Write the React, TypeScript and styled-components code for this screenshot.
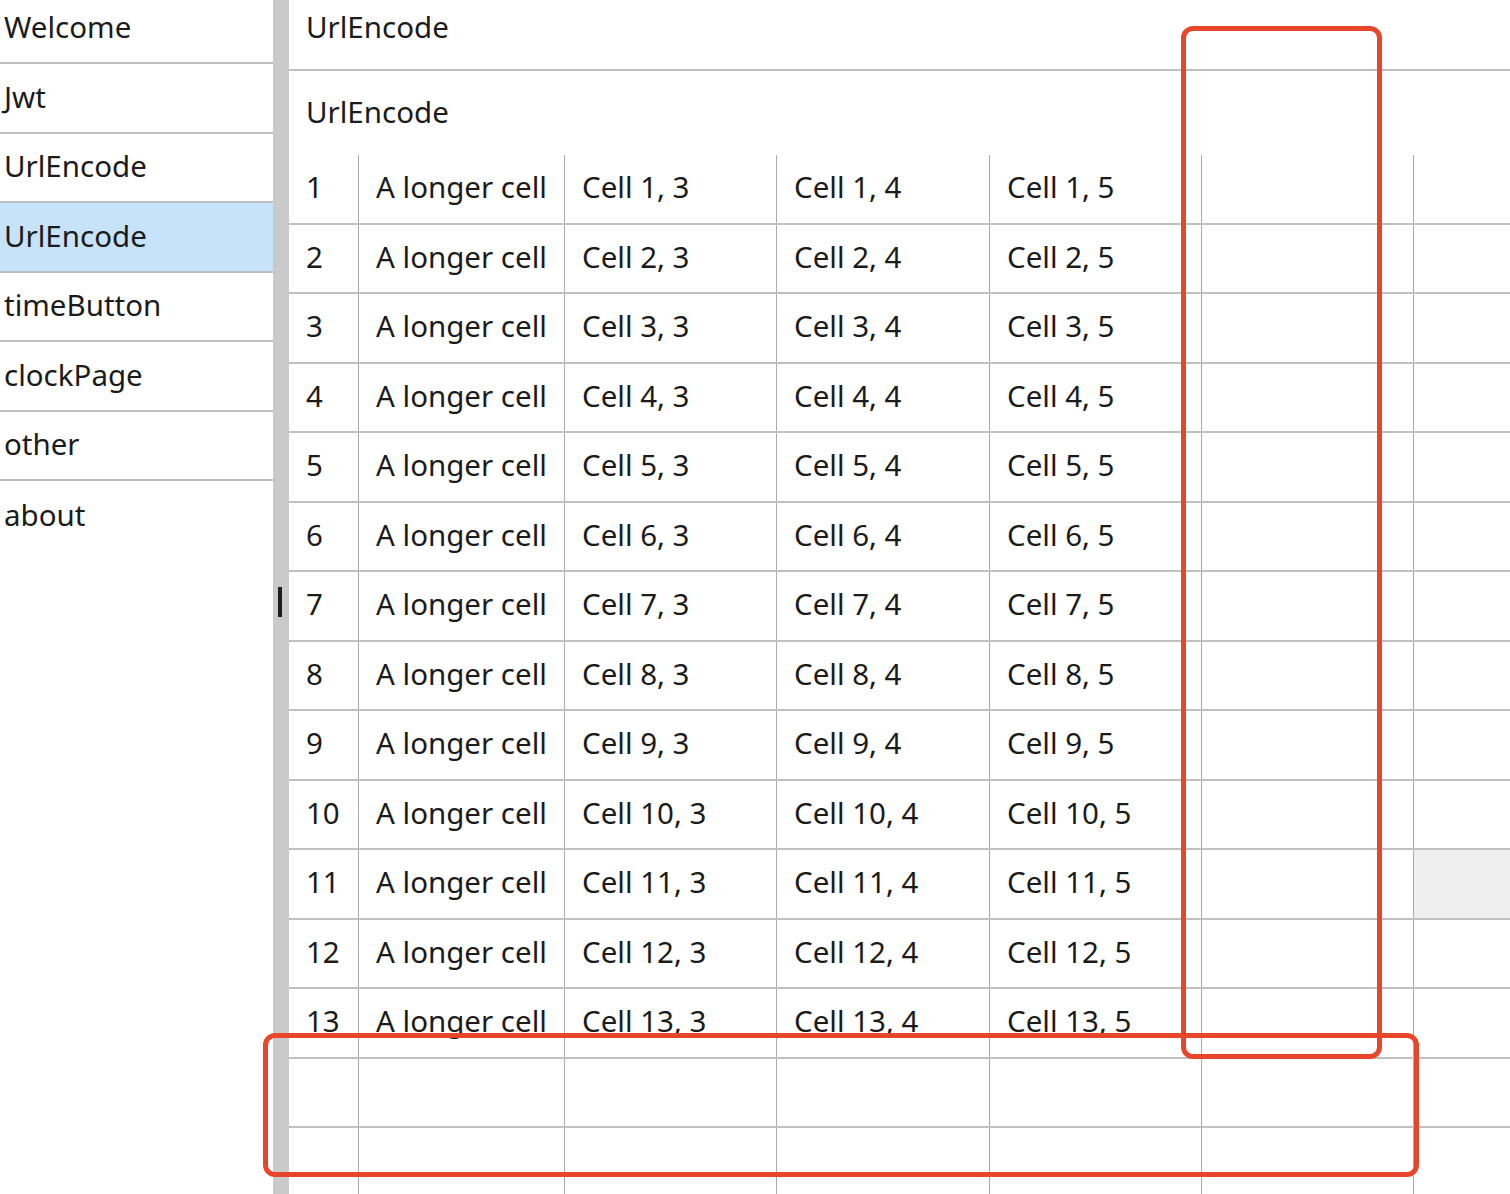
import styled, { createGlobalStyle } from "styled-components";

const GlobalStyle = createGlobalStyle`
  html, body {
    margin: 0;
    padding: 0;
    background: #ffffff;
    overflow: hidden;
  }

  * {
    box-sizing: border-box;
  }
`;

const Page = styled.div`
  position: relative;
  display: flex;
  width: 100vw;
  height: 100vh;
  overflow: hidden;
  font-family: "Noto Sans", "Open Sans", sans-serif;
  font-size: 29.5px;
  color: #1b1b1b;
`;

const Sidebar = styled.nav`
  width: 273px;
  flex-shrink: 0;
  display: flex;
  flex-direction: column;
  background: #ffffff;
`;

const NavItem = styled.div<{ $selected?: boolean; $first?: boolean; $last?: boolean }>`
  height: ${(p) => (p.$first ? "64px" : "69.5px")};
  display: flex;
  align-items: center;
  padding-left: 4px;
  padding-bottom: ${(p) => (p.$first ? "10px" : "3px")};
  background: ${(p) => (p.$selected ? "#c7e3f9" : "transparent")};
  border-bottom: ${(p) => (p.$last ? "none" : "2px solid #bfbfbf")};
  white-space: nowrap;
`;

const Splitter = styled.div`
  width: 16px;
  flex-shrink: 0;
  background: #cacaca;
  display: flex;
  align-items: center;
  padding-top: 10px;
`;

const SplitterHandle = styled.div`
  width: 4px;
  height: 30px;
  margin-left: 5px;
  background: #1e1e1e;
`;

const Content = styled.main`
  flex: 1;
  display: flex;
  flex-direction: column;
  min-width: 0;
`;

const TitleBar = styled.div`
  height: 71px;
  flex-shrink: 0;
  display: flex;
  align-items: center;
  padding-left: 17px;
  padding-bottom: 16px;
  border-bottom: 2px solid #bfbfbf;
`;

const SubTitle = styled.div`
  height: 84px;
  flex-shrink: 0;
  display: flex;
  align-items: center;
  padding-left: 17px;
  padding-bottom: 4px;
`;

const Table = styled.div`
  display: flex;
  flex-direction: column;
`;

const Row = styled.div`
  display: grid;
  grid-template-columns: 69px 206px 212px 213px 212px 212px 1fr;
  height: 69.5px;
  flex-shrink: 0;
  border-bottom: 2px solid #c0c0c0;
`;

const Cell = styled.div<{ $shaded?: boolean }>`
  display: flex;
  align-items: center;
  padding-left: 17px;
  padding-bottom: 4px;
  white-space: nowrap;
  overflow: visible;
  background: ${(p) => (p.$shaded ? "#efefef" : "transparent")};

  & + & {
    border-left: 1.5px solid #ababab;
  }
`;

const Highlight = styled.div`
  position: absolute;
  border: 5.5px solid #e8462b;
  border-radius: 12px;
  pointer-events: none;
`;

const navItems = ["Welcome", "Jwt", "UrlEncode", "UrlEncode", "timeButton", "clockPage", "other", "about"];

const rows = Array.from({ length: 15 }, (_, i) => i + 1);

export default function App() {
  return (
    <>
      <GlobalStyle />
      <Page>
        <Sidebar>
          {navItems.map((item, i) => (
            <NavItem
              key={i}
              $first={i === 0}
              $last={i === navItems.length - 1}
              $selected={i === 3}
            >
              {item}
            </NavItem>
          ))}
        </Sidebar>
        <Splitter>
          <SplitterHandle />
        </Splitter>
        <Content>
          <TitleBar>UrlEncode</TitleBar>
          <SubTitle>UrlEncode</SubTitle>
          <Table>
            {rows.map((n) => {
              const filled = n <= 13;
              return (
                <Row key={n}>
                  <Cell>{filled ? n : ""}</Cell>
                  <Cell>{filled ? "A longer cell" : ""}</Cell>
                  <Cell>{filled ? `Cell ${n}, 3` : ""}</Cell>
                  <Cell>{filled ? `Cell ${n}, 4` : ""}</Cell>
                  <Cell>{filled ? `Cell ${n}, 5` : ""}</Cell>
                  <Cell />
                  <Cell $shaded={n === 11} />
                </Row>
              );
            })}
          </Table>
        </Content>
        <Highlight style={{ left: 1181, top: 26, width: 201, height: 1033 }} />
        <Highlight style={{ left: 263, top: 1033, width: 1156, height: 144 }} />
      </Page>
    </>
  );
}
